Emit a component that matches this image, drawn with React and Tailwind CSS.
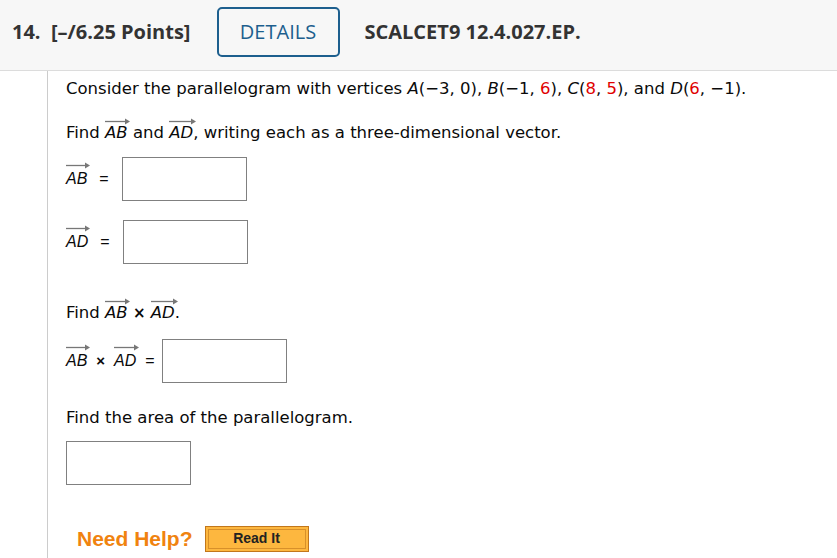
import React from "react";

function Arrow({ w }) {
  return (
    <svg
      className="absolute left-0 top-[-5px]"
      width={w}
      height="7"
      viewBox={`0 0 ${w} 7`}
    >
      <line x1="0" y1="3.5" x2={w - 3} y2="3.5" stroke="#777" strokeWidth="1.3" />
      <path d={`M${w - 5} 0.5 L${w} 3.5 L${w - 5} 6.5 Z`} fill="#777" />
    </svg>
  );
}

function Vec({ children, w = 30 }) {
  return (
    <span className="relative inline-block">
      <Arrow w={w} />
      <i>{children}</i>
    </span>
  );
}

function Box({ className = "" }) {
  return (
    <span
      className={`inline-block w-[125px] h-[44px] border border-[#808080] bg-white align-middle ${className}`}
    />
  );
}

const R = ({ children }) => <span className="text-[#e00000]">{children}</span>;

export default function App() {
  return (
    <div className="w-[837px] h-[558px] overflow-hidden bg-white">
      <div className="h-[71px] bg-[#f7f7f7] border-b border-[#dcdcdc] flex items-center pl-3 font-['Open_Sans',sans-serif] text-[#333]">
        <span className="text-[20px] font-bold mt-[-6px]">14.&nbsp; [–/6.25 Points]</span>
        <span className="ml-[26px] h-[50px] w-[123px] border-2 border-[#1d5f8e] rounded-[5px] flex items-center justify-center text-[20px] text-[#1d5f8e] mt-[-7px]">
          DETAILS
        </span>
        <span className="ml-[25px] text-[20px] font-bold mt-[-6px]">SCALCET9 12.4.027.EP.</span>
      </div>
      <div className="ml-[47px] border-l border-[#cccccc] h-[487px] pl-[18px] font-['DejaVu_Sans',Verdana,sans-serif] text-[16.5px] text-[#0a0a0a]">
        <p className="pt-[8px] leading-[20px]">
          Consider the parallelogram with vertices <i>A</i>(−3, 0), <i>B</i>(−1, <R>6</R>),{" "}
          <i>C</i>(<R>8</R>, <R>5</R>), and <i>D</i>(<R>6</R>, −1).
        </p>
        <p className="mt-[24px] leading-[20px]">
          Find <Vec w={25}>AB</Vec> and <Vec w={27}>AD</Vec>, writing each as a three-dimensional vector.
        </p>
        <div className="mt-[14px] flex items-center h-[44px] font-['Liberation_Sans',Arial,sans-serif]">
          <span className="italic relative text-[16px]">
            <Arrow w={24} />AB
          </span>
          <span className="ml-[12px] text-[16px]">=</span>
          <Box className="ml-[13px]" />
        </div>
        <div className="mt-[19px] flex items-center h-[44px] font-['Liberation_Sans',Arial,sans-serif]">
          <span className="italic relative text-[16px]">
            <Arrow w={24} />AD
          </span>
          <span className="ml-[12px] text-[16px]">=</span>
          <Box className="ml-[13px]" />
        </div>
        <p className="mt-[39px] leading-[20px]">
          Find <Vec w={25}>AB</Vec> <span className="font-bold text-[15px]">×</span> <Vec w={27}>AD</Vec>.
        </p>
        <div className="mt-[16px] flex items-center h-[44px] font-['Liberation_Sans',Arial,sans-serif]">
          <span className="italic relative text-[16px]">
            <Arrow w={24} />AB
          </span>
          <span className="ml-[9px] font-bold text-[15px]">×</span>
          <span className="italic relative text-[16px] ml-[9px]">
            <Arrow w={25} />AD
          </span>
          <span className="ml-[9px] text-[16px]">=</span>
          <Box className="ml-[7px]" />
        </div>
        <p className="mt-[25px] leading-[20px]">Find the area of the parallelogram.</p>
        <div className="mt-[13px]">
          <Box />
        </div>
        <div className="mt-[38px] flex items-center pl-[11px] font-['Liberation_Sans',Arial,sans-serif]">
          <span className="text-[#f0830f] font-bold text-[21px]">Need Help?</span>
          <span className="ml-[12px] w-[104px] h-[26px] bg-[#fdb73f] border border-[#c2771b] flex items-center justify-center">
            <span className="w-[98px] h-[20px] border border-[#d8902a] flex items-center justify-center text-[14px] font-bold text-[#222]">
              Read It
            </span>
          </span>
        </div>
      </div>
    </div>
  );
}
